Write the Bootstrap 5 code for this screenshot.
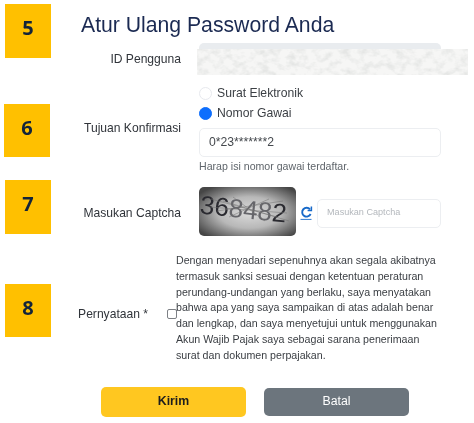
<!doctype html>
<html lang="id">
<head>
<meta charset="utf-8">
<title>Atur Ulang Password Anda</title>
<link rel="stylesheet" href="https://cdn.jsdelivr.net/npm/bootstrap@5.3.0/dist/css/bootstrap.min.css">
<style>
html,body{margin:0;background:#fff;overflow:hidden}
body{font-family:"Liberation Sans",Arial,sans-serif;color:#2f3236;width:474px;height:423px;position:relative;filter:blur(.45px)}
.step-tag{position:absolute;width:46px;background:#ffc000;color:#13243a;font-family:"Open Sans",sans-serif;font-weight:700;font-size:20px;display:flex;align-items:center;justify-content:center;padding-bottom:6px}
.sheet{padding:13px 33px 0 0}
.page-title{font-size:21.2px;line-height:24px;font-weight:400;color:#1b2a52;margin:0 0 6px 81px}
.f-row{display:flex}
.f-lab{width:181px;flex:none;text-align:right;font-size:12.1px;color:#30343a;margin:0}
.f-ctl{margin-left:18px;flex:1;min-width:0}
.id-row{height:32px;align-items:center}
.id-ctl{position:relative;height:32px;background:#e9ecef;border-radius:5px}
.id-mask{position:absolute;left:-2px;top:6px;width:271px;height:26px;display:block}
.dest-row{margin-top:8px;align-items:center}
.opt{display:flex;align-items:center;height:20px;font-size:12.2px;color:#3b3f44}
.dot{width:13px;height:13px;border-radius:50%;border:1px solid #e7e9ee;background:#fff;margin-right:5px;flex:none}
.dot-on{background:#0d6efd;border-color:#0d6efd}
.fake-in{border:1px solid #eceef1;border-radius:5px;background:#fff;display:flex;align-items:center}
.phone{height:29px;margin-top:5px;padding-left:9px;font-size:12.2px;color:#45494e}
.hint{font-size:10.6px;line-height:14px;color:#5f656b;margin-top:2px}
.cap-row{margin-top:14px;align-items:center}
.cap-lab{padding-top:4px}
.cap-ctl{display:flex;align-items:center}
.cap-img{width:97px;height:49px;border-radius:5px;flex:none;position:relative;overflow:hidden;background:radial-gradient(ellipse 64% 64% at 52% 52%,#dcdcdc 0%,#b8b8b8 50%,#464646 100%);color:#2a2a30;font-family:"Liberation Sans",sans-serif;font-size:26px;line-height:49px;padding-left:1px;white-space:nowrap}
.cap-img span{position:relative;top:-2px;display:inline-block;transform:rotate(6deg)}
.cap-img i{font-style:normal;color:#65656a}
.cap-img svg{position:absolute;left:0;top:0}
.cap-ref{width:14px;height:14px;margin:3px 4px 0 3px;flex:none;display:block}
.cap-in{flex:1;height:29px;margin-top:3px;padding-left:9px;font-size:9.1px;color:#b4b8bd}
.st-row{margin-top:17px;align-items:center}
.st-lab{width:148px;padding-top:11px}
.st-box{width:10px;height:10px;margin:11px 0 0 19px;flex:none;border:1px solid #7d8085;border-radius:2px;background:#fff}
.st-text{font-size:10.65px;line-height:15.8px;color:#3a3e43;margin:0 0 0 -1px;white-space:nowrap}
.act-row{display:flex;justify-content:flex-start;gap:18px;margin:23px 0 0 101px;align-items:center}
.act-btn{width:145px;border:0;border-radius:5px;font-size:12.3px;padding:0}
.act-ok{height:30px;background:#ffc720;color:#1d1d1d;font-weight:700}
.act-no{height:28px;background:#6c757d;color:#fff}
</style>
</head>
<body>
<div class="step-tag" style="left:5px;top:4px;height:54px">5</div>
<div class="step-tag" style="left:4px;top:104px;height:53px">6</div>
<div class="step-tag" style="left:5px;top:180px;height:54px">7</div>
<div class="step-tag" style="left:5px;top:284px;height:53px">8</div>

<main class="sheet">
  <h1 class="page-title">Atur Ulang Password Anda</h1>
  <div class="f-row id-row">
    <p class="f-lab">ID Pengguna</p>
    <div class="f-ctl id-ctl">
      <svg class="id-mask" viewBox="0 0 271 26" aria-hidden="true">
        <filter id="nz" x="0" y="0" width="100%" height="100%"><feTurbulence type="fractalNoise" baseFrequency=".11 .15" numOctaves="3" seed="7"/><feColorMatrix values="0 0 0 0 .78  0 0 0 0 .79  0 0 0 0 .78  2.6 0 0 0 -1.1"/><feGaussianBlur stdDeviation=".7"/></filter>
        <rect width="271" height="26" fill="#f6f6f5"/>
        <rect width="271" height="26" filter="url(#nz)"/>
      </svg>
    </div>
  </div>
  <div class="f-row dest-row">
    <p class="f-lab">Tujuan Konfirmasi</p>
    <div class="f-ctl">
      <div class="opt"><span class="dot"></span>Surat Elektronik</div>
      <div class="opt"><span class="dot dot-on"></span>Nomor Gawai</div>
      <div class="fake-in phone">0*23*******2</div>
      <div class="hint">Harap isi nomor gawai terdaftar.</div>
    </div>
  </div>
  <div class="f-row cap-row">
    <p class="f-lab cap-lab">Masukan Captcha</p>
    <div class="f-ctl cap-ctl">
      <div class="cap-img"><span>36<i>848</i>2</span>
        <svg width="97" height="49" viewBox="0 0 97 49" fill="none" stroke="#707070" stroke-width=".5" aria-hidden="true"><path d="M12 12 78 30M18 24 84 14M10 20 88 26M30 30 70 12M24 14 90 34M34 10 66 34"/></svg>
      </div>
      <svg class="cap-ref" viewBox="0 0 14 14" fill="none" stroke="#1769c9" stroke-width="1.9" aria-hidden="true"><path d="M11 3.4A4.4 4.4 0 1 0 11.6 8"/><path d="M12.4 .6V4.4H8.6" stroke-width="1.5"/><path d="M1.5 13.4H12.5" stroke-width=".9"/></svg>
      <div class="fake-in cap-in">Masukan Captcha</div>
    </div>
  </div>
  <div class="f-row st-row">
    <p class="f-lab st-lab">Pernyataan *</p>
    <span class="st-box"></span>
    <p class="st-text">Dengan menyadari sepenuhnya akan segala akibatnya<br>termasuk sanksi sesuai dengan ketentuan peraturan<br>perundang-undangan yang berlaku, saya menyatakan<br>bahwa apa yang saya sampaikan di atas adalah benar<br>dan lengkap, dan saya menyetujui untuk menggunakan<br>Akun Wajib Pajak saya sebagai sarana penerimaan<br>surat dan dokumen perpajakan.</p>
  </div>
  <div class="act-row">
    <button type="button" class="btn act-btn act-ok">Kirim</button>
    <button type="button" class="btn act-btn act-no">Batal</button>
  </div>
</main>
<script src="https://cdn.jsdelivr.net/npm/bootstrap@5.3.0/dist/js/bootstrap.bundle.min.js"></script>
</body>
</html>
